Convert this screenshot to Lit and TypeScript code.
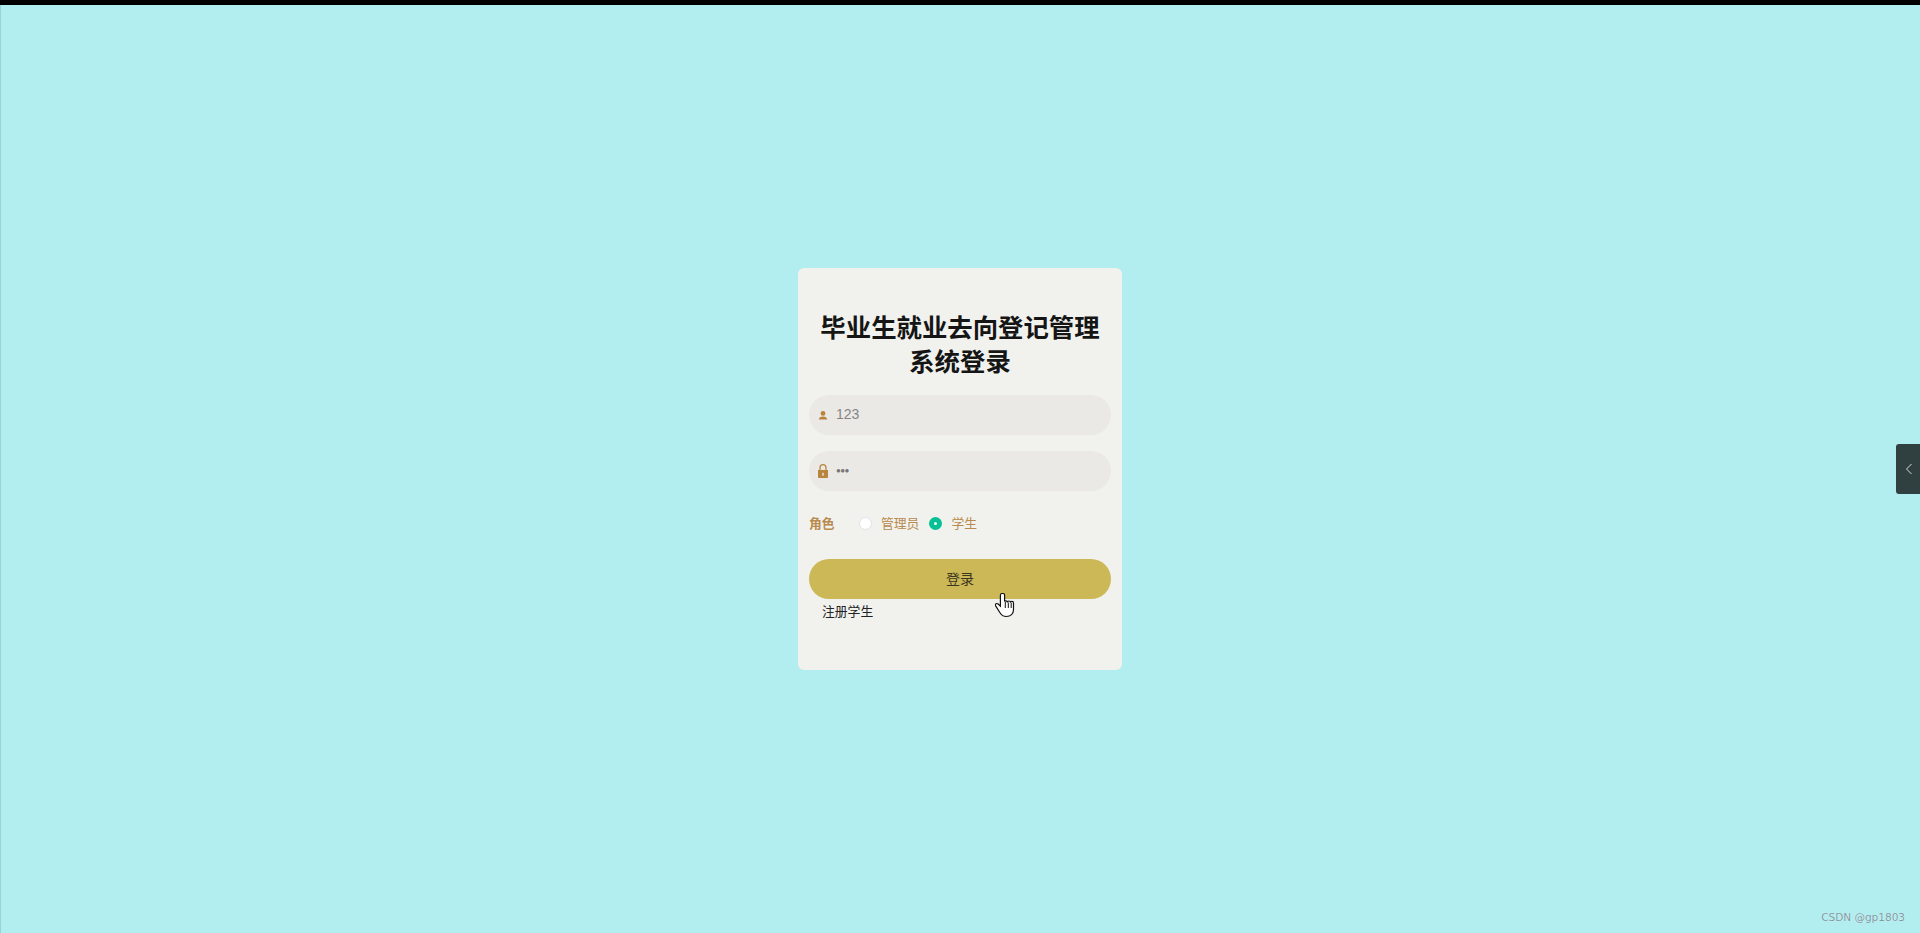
import { LitElement, html, css } from "lit";
import { customElement } from "lit/decorators.js";

@customElement("app-root")
export class AppRoot extends LitElement {
  static styles = css`
    :host {
      display: block;
      position: relative;
      height: 933px;
      overflow: hidden;
      background: #b2edef;
      font-family: "Liberation Sans", "Noto Sans CJK SC", sans-serif;
    }
    .topbar { height: 5px; background: #000; }
    .main {
      height: 928px;
      box-sizing: border-box;
      border-left: 1px solid #93d6d8;
      display: flex;
      align-items: center;
      justify-content: center;
    }
    .card {
      width: 324px;
      box-sizing: border-box;
      margin-left: -1px;
      padding: 41px 11px 50px;
      background: #f1f2ee;
      border-radius: 6px;
      display: flex;
      flex-direction: column;
    }
    h1 {
      margin: 0 0 18px;
      font-family: "Noto Sans CJK SC", sans-serif;
      font-size: 25.4px;
      font-weight: 700;
      line-height: 34px;
      text-align: center;
      color: #151515;
    }
    .field {
      height: 40px;
      border-radius: 20px;
      background: #ebe9e6;
      display: flex;
      align-items: center;
      padding-left: 7px;
      gap: 6px;
      margin-bottom: 16px;
    }
    .field svg { width: 14px; height: 14px; flex: none; fill: #b9843d; }
    .field input {
      flex: 1;
      min-width: 0;
      border: 0;
      outline: 0;
      padding: 0 0 2px;
      background: transparent;
      font-family: "Liberation Sans", sans-serif;
      font-size: 14px;
      color: #858585;
    }
    .field input.pwd { font-size: 8px; letter-spacing: -0.6px; color: #777; }
    .role {
      height: 20px;
      margin: 5px 0 27px;
      display: flex;
      align-items: center;
      color: #b98a4d;
      font-family: "Noto Sans CJK SC", sans-serif;
      font-size: 12.8px;
    }
    .role-label { width: 50px; font-weight: 700; }
    .opt { display: flex; align-items: center; margin-right: 10px; }
    .opt input {
      appearance: none;
      width: 13px;
      height: 13px;
      margin: 3px 9px 0 0;
      border-radius: 50%;
      background: #fff;
      border: 1px solid #e2e2e8;
      box-sizing: border-box;
    }
    .opt input:checked { background: #fff; border: 5px solid #08c096; }
    button {
      height: 40px;
      border: 0;
      border-radius: 20px;
      background: #ccb857;
      color: #3a3420;
      font-family: "Noto Sans CJK SC", sans-serif;
      font-size: 14px;
      padding: 0 0 3px;
    }
    .register {
      margin-top: 3px;
      padding-left: 13px;
      line-height: 18px;
      font-family: "Noto Sans CJK SC", sans-serif;
      font-size: 12.8px;
      color: #222;
      text-decoration: none;
    }
    .tab {
      position: absolute;
      right: 0;
      top: 444px;
      width: 24px;
      height: 50px;
      background: #303f40;
      border-radius: 3px 0 0 3px;
      display: flex;
      align-items: center;
      padding-left: 9px;
      box-sizing: border-box;
    }
    .tab svg { width: 8px; height: 12px; fill: none; stroke: #d5dddd; stroke-width: 1; }
    .mark {
      position: absolute;
      right: 15px;
      bottom: 9px;
      font-family: "DejaVu Sans", sans-serif;
      font-size: 10.5px;
      line-height: 14px;
      color: #8299a3;
      text-shadow: 0 0 1px #e8ffff;
    }
    .cursor { position: absolute; left: 995px; top: 592px; width: 21px; height: 26px; }
  `;

  render() {
    return html`
      <div class="topbar"></div>
      <div class="main">
        <form class="card" @submit=${(e: Event) => e.preventDefault()}>
          <h1>毕业生就业去向登记管理系统登录</h1>
          <label class="field">
            <svg viewBox="0 0 14 14"><circle cx="7" cy="5.400" r="2.400"/><path d="M2.800 11.400c0-2.100 1.900-3 4.200-3s4.200.9 4.200 3z"/></svg>
            <input type="text" .value=${"123"} />
          </label>
          <label class="field">
            <svg viewBox="0 0 14 14"><path d="M2 6h10v7.200a.8.8 0 0 1-.8.8H2.800a.8.8 0 0 1-.8-.8z M6.300 8.800v3h1.400v-3z" fill-rule="evenodd"/><path d="M3.400 6V3.600a3.600 3.600 0 0 1 7.200 0V6H9.300V3.600a2.300 2.300 0 0 0-4.600 0V6z"/></svg>
            <input class="pwd" type="text" .value=${"●●●"} />
          </label>
          <div class="role">
            <span class="role-label">角色</span>
            <label class="opt"><input type="radio" name="role" />管理员</label>
            <label class="opt"><input type="radio" name="role" checked />学生</label>
          </div>
          <button type="submit">登录</button>
          <a class="register" href="#">注册学生</a>
        </form>
      </div>
      <div class="tab"><svg viewBox="0 0 8 12"><path d="M6.500 1L1.500 6l5 5"/></svg></div>
      <div class="mark">CSDN @gp1803</div>
      <svg class="cursor" viewBox="0 0 21 26">
        <path d="M7 1.500c-1 0-1.600.7-1.600 1.700v11l-2.300-2.200c-.9-.8-2-.6-2.500.1-.4.600-.3 1.400.2 2.100l4.200 6.500c1.500 2.500 3.300 3.800 6.300 3.800 4.300 0 7.200-2.800 7.200-7.100v-6.500c0-1-.7-1.600-1.500-1.600s-1.500.6-1.500 1.400c0-1-.7-1.700-1.600-1.700s-1.500.6-1.500 1.400c0-1-.7-1.600-1.500-1.600-.6 0-1.100.3-1.300.7V3.200c0-1-.6-1.700-1.600-1.700z" fill="#fff" stroke="#111" stroke-width="1.200"/>
        <path d="M10.300 10v6M13.300 10.500V16M16.200 11v5" fill="none" stroke="#111" stroke-width="1"/>
      </svg>
    `;
  }
}
